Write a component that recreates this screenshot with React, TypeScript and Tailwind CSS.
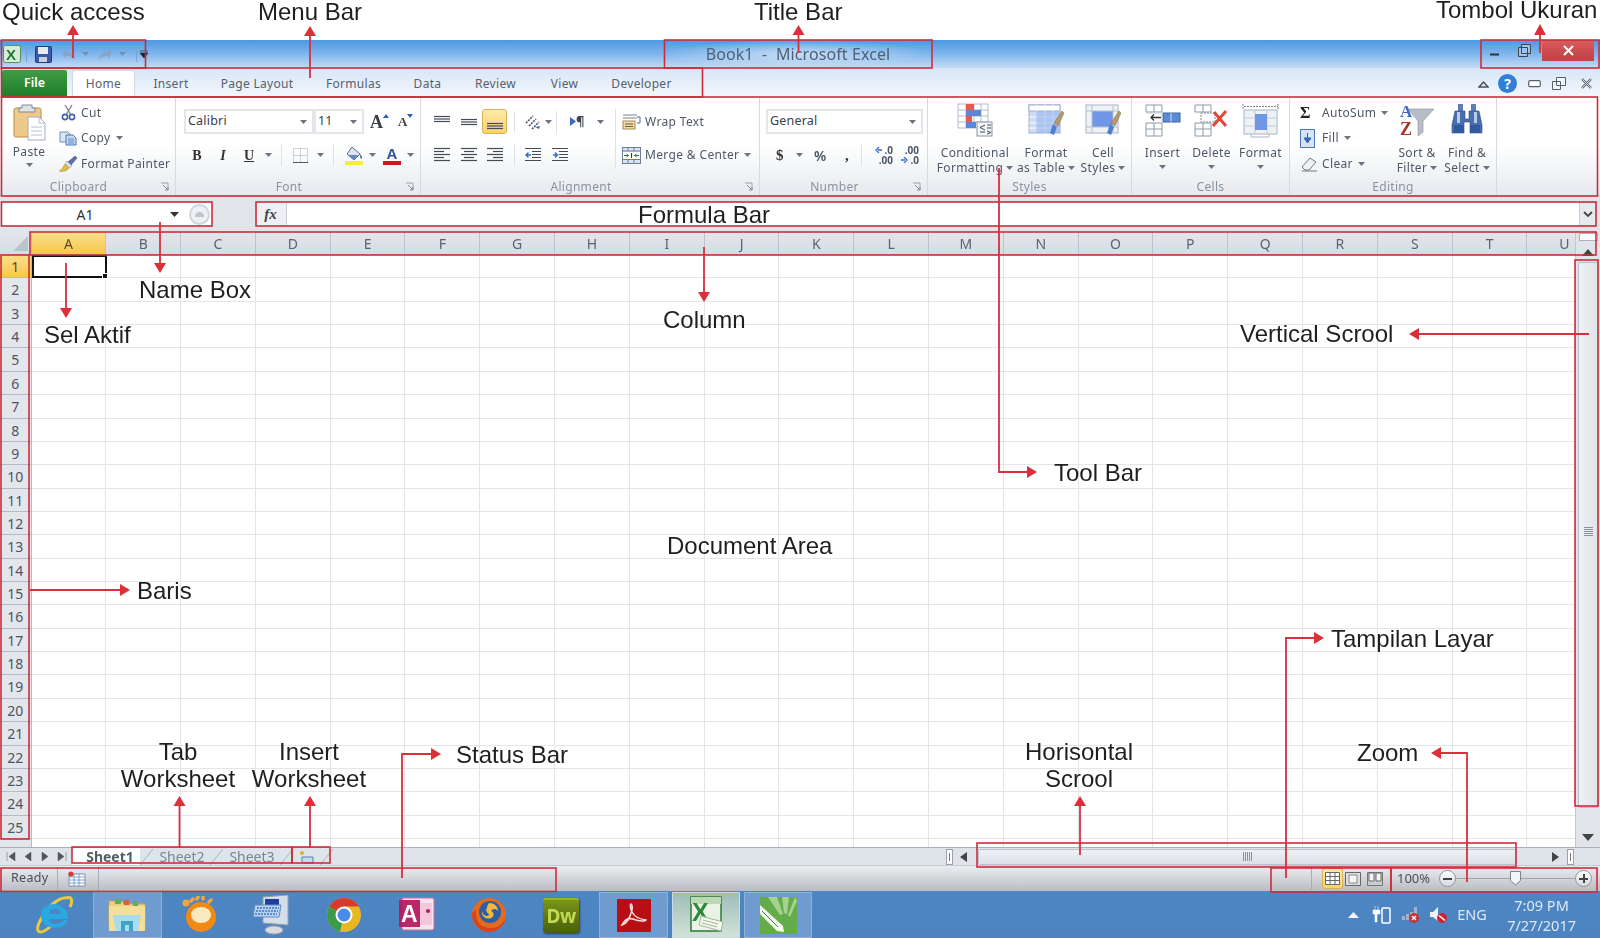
import type { ReactNode } from "react";

const cols = "ABCDEFGHIJKLMNOPQRSTU".split("");
const rows = Array.from({ length: 26 }, (_, i) => i + 1);

const Caret = ({ className = "" }: { className?: string }) => (
  <svg width="7" height="4" viewBox="0 0 7 4" className={className}>
    <path d="M0 0h7L3.5 4z" fill="#6b7480" />
  </svg>
);

const Sep = ({ className = "" }: { className?: string }) => (
  <div className={`w-px h-[22px] bg-[#dfe2e7] ${className}`} />
);

const Launcher = () => (
  <svg width="10" height="10" viewBox="0 0 10 10" className="absolute right-[5px] bottom-[3px]">
    <path d="M1 1h7v7" fill="none" stroke="#9aa3ad" />
    <path d="M3 3l5 5M8 5v3H5" fill="none" stroke="#7f8a97" />
  </svg>
);

const Group = ({ label, w, launcher, children }: { label: string; w: string; launcher?: boolean; children: ReactNode }) => (
  <div className={`relative h-full flex flex-col border-r border-[#d7dbe1] shrink-0 ${w}`}>
    <div className="flex-1 min-h-0">{children}</div>
    <div className={`h-[16px] text-center text-[12px] leading-[15px] text-[#8a93a0] tracking-[0.3px] ${launcher ? "pr-[18px]" : ""}`}>{label}</div>
    {launcher && <Launcher />}
  </div>
);

const AlignLines = ({ kind }: { kind: "top" | "mid" | "bot" | "left" | "center" | "right" }) => {
  const ys = kind === "top" ? [2, 4.5, 7] : kind === "mid" ? [5, 7.5, 10] : kind === "bot" ? [9, 11.5, 14] : [1, 4, 7, 10, 13];
  const widths = [16, 10, 16, 10, 16];
  return (
    <svg width="18" height="16" viewBox="0 0 18 16">
      {ys.map((y, i) => {
        const w = ys.length === 3 ? 16 : widths[i];
        const x = kind === "right" ? 17 - w : kind === "center" ? 9 - w / 2 : 1;
        return <path key={y} d={`M${x} ${y + 0.5}h${w}`} stroke="#444b55" strokeWidth="1.2" />;
      })}
    </svg>
  );
};

const SmallText = ({ children, className = "" }: { children: ReactNode; className?: string }) => (
  <span className={`text-[12px] tracking-[0.35px] text-[#4f5866] whitespace-nowrap ${className}`}>{children}</span>
);

const BigButton = ({ w, icon, l1, l2, caretInline }: { w: string; icon: ReactNode; l1: string; l2?: string; caretInline?: boolean }) => (
  <div className={`flex flex-col items-center shrink-0 ${w}`}>
    <div className="h-[37px] flex items-center justify-center">{icon}</div>
    <SmallText className="leading-[15px] mt-[7px]">{l1}</SmallText>
    {caretInline ? (
      <SmallText className="leading-[15px] flex items-center gap-[3px]">
        {l2} <Caret />
      </SmallText>
    ) : (
      <Caret className="mt-[5px]" />
    )}
  </div>
);

const CondIcon = () => (
  <svg width="36" height="34" viewBox="0 0 36 34">
    <path d="M1 1h30v24H1zM1 7h30M1 13h30M1 19h30M9 1v24M17 1v24M24 1v24" fill="#fff" stroke="#aebccd" />
    <rect x="9" y="1" width="8" height="6" fill="#e8594c" />
    <rect x="9" y="7" width="8" height="6" fill="#5d85d6" />
    <rect x="9" y="7" width="15" height="6" fill="#5d85d6" />
    <rect x="9" y="13" width="6" height="6" fill="#e8594c" />
    <rect x="9" y="19" width="10" height="6" fill="#5d85d6" />
    <rect x="20" y="19" width="15" height="14" fill="#f4f6f9" stroke="#8793a3" />
    <path d="M28 22l-5 2.5 5 2.5M23 29h5M30 22h4M30 25h4M30 28l4 1.5-4 1.5" fill="none" stroke="#3f4a58" />
  </svg>
);

const Brush = () => (
  <>
    <path d="M22 30l3-9 4 3-3 8z" fill="#4f7fd1" />
    <path d="M26 20l8-12 2 2-6 13z" fill="#b89a6a" stroke="#80694a" strokeWidth=".5" />
  </>
);

const TableIcon = () => (
  <svg width="36" height="34" viewBox="0 0 36 34">
    <rect x="1" y="2" width="31" height="28" fill="#cfdcf5" stroke="#9fb0c6" />
    <rect x="1" y="2" width="31" height="6" fill="#fff" stroke="#9fb0c6" />
    <path d="M9 2v28M17 2v28M25 2v28M1 14h31M1 20h31M1 25h31" stroke="#fff" />
    <path d="M8 8h24v22H8z" fill="#8fb0ea" opacity=".55" />
    <Brush />
  </svg>
);

const CellStyleIcon = () => (
  <svg width="36" height="34" viewBox="0 0 36 34">
    <rect x="1" y="2" width="32" height="28" fill="#eef2f7" stroke="#a8b4c3" />
    <rect x="7" y="8" width="21" height="16" fill="#6f97e6" />
    <path d="M7 2v28M28 2v28M1 8h32M1 24h32" stroke="#b4bfcd" />
    <Brush />
  </svg>
);

const InsertIcon = () => (
  <svg width="36" height="34" viewBox="0 0 36 34">
    <path d="M1 2h16v7H1zM9 2v7M1 20h16v13H1zM1 26h16M9 20v13" fill="#fff" stroke="#8c98a8" />
    <rect x="18" y="10" width="17" height="9" fill="#5d8ad6" stroke="#3d659f" />
    <path d="M26 10v9" stroke="#c9daf3" />
    <path d="M16 14.5H6M9 11.5l-3 3 3 3" fill="none" stroke="#333" strokeWidth="1.3" />
    <path d="M1 10h16v9" fill="none" stroke="#c5ccd6" />
  </svg>
);

const DeleteIcon = () => (
  <svg width="36" height="34" viewBox="0 0 36 34">
    <path d="M1 2h16v7H1zM9 2v7M1 20h16v13H1zM1 26h16M9 20v13" fill="#fff" stroke="#8c98a8" />
    <rect x="7" y="10" width="14" height="9" fill="#fff" stroke="#7d8a9a" strokeDasharray="2 1" />
    <path d="M20 9l12 14M32 8L19 23" stroke="#e2483a" strokeWidth="3" />
  </svg>
);

const FormatIcon = () => (
  <svg width="38" height="36" viewBox="0 0 38 36">
    <path d="M1 2v5M36 2v5M2 4.5h34" stroke="#596473" strokeWidth=".8" strokeDasharray="2 1" />
    <rect x="2" y="8" width="33" height="24" fill="#eef2f7" stroke="#a8b4c3" />
    <path d="M13 8v24M25 8v24M2 16h33M2 24h33" stroke="#c4ccd6" />
    <rect x="13" y="12" width="12" height="16" fill="#6f97e6" />
    <path d="M9 32v3h18v-3" fill="none" stroke="#a8b4c3" />
  </svg>
);

const FilterIcon = () => (
  <svg width="36" height="36" viewBox="0 0 36 36">
    <path d="M9 7h26l-11 12v11l-5 4V19z" fill="#b8bec7" stroke="#868e99" strokeWidth=".6" />
    <text x="1" y="15" fontSize="17" fontWeight="700" fontFamily="Liberation Serif, serif" fill="#3d6cc4">A</text>
    <text x="1" y="33" fontSize="18" fontWeight="700" fontFamily="Liberation Serif, serif" fill="#a5372f">Z</text>
  </svg>
);

const BinocularsIcon = () => (
  <svg width="34" height="34" viewBox="0 0 34 34">
    <path d="M8 1h5v7H8zM21 1h5v7h-5z" fill="#5d7fb8" />
    <path d="M5 8h10v8h4V8h10l3 14v8H20V19h-6v11H2v-8z" fill="#4a6fae" stroke="#2b4a80" strokeWidth=".6" />
    <path d="M4 22h10v8H4zM20 22h10v8H20z" fill="#2f5aa0" />
    <path d="M7 9h3v11H7zM24 9h3v11h-3z" fill="#b9cdea" />
  </svg>
);

const PasteIcon = () => (
  <svg width="33" height="38" viewBox="0 0 33 38">
    <rect x="1" y="5" width="27" height="29" rx="2" fill="#efc98a" stroke="#b8904f" />
    <path d="M9 5V2h10v3h3v4H6V5z" fill="#dfe3e8" stroke="#7f8894" />
    <path d="M15 14h11l6 6v17H15z" fill="#fff" stroke="#a3adb9" />
    <path d="M26 14v6h6M18 24h11M18 28h11M18 32h11" fill="none" stroke="#b9c2cd" />
  </svg>
);

const CutIcon = () => (
  <svg width="15" height="17" viewBox="0 0 15 17">
    <path d="M4 1l6 10M11 1L5 11" stroke="#7d8794" strokeWidth="1.4" />
    <circle cx="4" cy="13" r="2.6" fill="none" stroke="#3c63a8" strokeWidth="1.6" />
    <circle cx="11" cy="13" r="2.6" fill="none" stroke="#3c63a8" strokeWidth="1.6" />
  </svg>
);

const CopyIcon = () => (
  <svg width="18" height="15" viewBox="0 0 18 15">
    <path d="M1 1h8l2 2v8H1z" fill="#dbe6f5" stroke="#6d8fbf" />
    <path d="M7 4h7l3 3v7H7z" fill="#c7d9f1" stroke="#4d77b5" />
    <path d="M9 8h6M9 10h6M9 12h6" stroke="#4d77b5" strokeWidth=".8" />
  </svg>
);

const PainterIcon = () => (
  <svg width="20" height="17" viewBox="0 0 20 17">
    <path d="M10 7l7-6 2 2-6 7z" fill="#5b6fa8" stroke="#39456e" strokeWidth=".5" />
    <path d="M9 6l5 5-3 2-4-4z" fill="#dcdfe5" stroke="#808894" strokeWidth=".5" />
    <path d="M7 9l4 4c-2 3-6 4-10 3 3-1 4-4 6-7z" fill="#e4b743" stroke="#a9842a" strokeWidth=".5" />
  </svg>
);

const ClipboardGroup = () => (
  <Group label="Clipboard" w="w-[176px]" launcher>
    <div className="flex h-full">
      <div className="w-[58px] flex flex-col items-center pt-[6px]">
        <PasteIcon />
        <SmallText className="leading-[14px] mt-[4px]">Paste</SmallText>
        <Caret className="mt-[4px]" />
      </div>
      <div className="flex flex-col pt-[3px]">
        <div className="h-[25.5px] flex items-center">
          <div className="w-[23px] pl-[3px]"><CutIcon /></div>
          <SmallText>Cut</SmallText>
        </div>
        <div className="h-[25.5px] flex items-center">
          <div className="w-[23px] pl-[1px]"><CopyIcon /></div>
          <SmallText>Copy</SmallText>
          <Caret className="ml-[5px]" />
        </div>
        <div className="h-[25.5px] flex items-center">
          <div className="w-[23px]"><PainterIcon /></div>
          <SmallText className="tracking-[0.2px]">Format Painter</SmallText>
        </div>
      </div>
    </div>
  </Group>
);

const Select = ({ w, text, caretPad }: { w: string; text: string; caretPad: string }) => (
  <div className={`h-[25px] bg-white border-2 border-[#e3e6ea] flex items-center justify-between ${caretPad} pl-[2px] ${w}`}>
    <span className="text-[12.5px] text-[#39404a] tracking-[0.2px]">{text}</span>
    <Caret />
  </div>
);

const BorderIcon = () => (
  <svg width="17" height="17" viewBox="0 0 17 17">
    <path d="M1.5 1.5h14v14h-14zM8.5 1.5v14M1.5 8.5h14" fill="none" stroke="#a4abb5" strokeDasharray="1 1" />
    <path d="M1 15.5h15" stroke="#555" />
  </svg>
);

const FillIcon = () => (
  <svg width="19" height="19" viewBox="0 0 19 19">
    <path d="M7 1l8 7-6 6-7-6z" fill="#dbe4f0" stroke="#5a6b85" />
    <path d="M3 9h10l-4 5z" fill="#5b86c9" />
    <path d="M15 8c2 2 3 4 1 5-1-1-1-3-1-5z" fill="#4b75b8" />
    <rect x="0" y="15" width="18" height="4" fill="#f5f02e" />
  </svg>
);

const FontGroup = () => (
  <Group label="Font" w="w-[245px]" launcher>
    <div className="pl-[8px] pt-[12px]">
      <div className="flex items-center h-[25px]">
        <Select w="w-[130px]" text="Calibri" caretPad="pr-[5px]" />
        <Select w="w-[50px]" text="11" caretPad="pr-[5px]" />
        <span className="ml-[6px] text-[18px] font-bold font-['Liberation_Serif',serif] text-[#3a3f47] leading-none">A</span>
        <svg width="6" height="4" viewBox="0 0 6 4" className="mb-[12px]"><path d="M0 4l3-4 3 4z" fill="#2f62b0" /></svg>
        <span className="ml-[9px] text-[13px] font-bold font-['Liberation_Serif',serif] text-[#3a3f47] leading-none">A</span>
        <svg width="6" height="4" viewBox="0 0 6 4" className="mb-[12px]"><path d="M0 0l3 4 3-4z" fill="#2f62b0" /></svg>
      </div>
      <div className="flex items-center h-[24px] mt-[9px]">
        <div className="w-[26px] text-center text-[14px] font-bold font-['Liberation_Serif',serif] text-[#333]">B</div>
        <div className="w-[26px] text-center text-[14px] font-bold italic font-['Liberation_Serif',serif] text-[#333]">I</div>
        <div className="w-[26px] text-center text-[14px] font-bold underline font-['Liberation_Serif',serif] text-[#333]">U</div>
        <Caret className="ml-[3px]" />
        <Sep className="ml-[9px]" />
        <div className="ml-[10px]"><BorderIcon /></div>
        <Caret className="ml-[8px]" />
        <Sep className="ml-[9px]" />
        <div className="ml-[11px]"><FillIcon /></div>
        <Caret className="ml-[5px]" />
        <div className="ml-[7px] w-[18px] flex flex-col items-center">
          <span className="text-[15px] leading-[15px] font-bold font-['Liberation_Sans',sans-serif] text-[#2d4f9e]">A</span>
          <div className="w-[18px] h-[4px] bg-[#d8131c]" />
        </div>
        <Caret className="ml-[6px]" />
      </div>
    </div>
  </Group>
);

const OrientIcon = () => (
  <svg width="18" height="16" viewBox="0 0 18 16">
    <path d="M2 9l7-7M5 12l7-7M8 15l7-7" stroke="#4a5563" strokeWidth="1.6" strokeDasharray="2 1" />
    <path d="M11 13l5-1-1 3z" fill="#3b6cb8" />
  </svg>
);

const Rtl = () => (
  <span className="flex items-center text-[13px] font-bold text-[#3f4650] leading-none">
    <svg width="6" height="9" viewBox="0 0 6 9"><path d="M0 0l6 4.5L0 9z" fill="#3b6cb8" /></svg>¶
  </span>
);

const IndentIcon = ({ flip }: { flip?: boolean }) => (
  <svg width="18" height="16" viewBox="0 0 18 16">
    <path d="M1 1.5h16M8 4.5h9M8 7.5h9M8 10.5h9M1 13.5h16" stroke="#444b55" strokeWidth="1.1" />
    <path d={flip ? "M2 8h4M4 5.5L6.5 8 4 10.5" : "M7 8H2M4.5 5.5L2 8l2.5 2.5"} fill="none" stroke="#2f6fc4" strokeWidth="1.4" />
  </svg>
);

const WrapIcon = () => (
  <svg width="19" height="17" viewBox="0 0 19 17">
    <path d="M1 2h14M1 5h14" stroke="#7b8390" strokeWidth="1.2" />
    <rect x="1" y="8" width="12" height="8" fill="#f1d9a7" stroke="#a98c52" />
    <path d="M3 11h8M3 13.5h8" stroke="#75613a" />
    <path d="M15 4h3v6h-3" fill="none" stroke="#3b6cb8" />
  </svg>
);

const MergeIcon = () => (
  <svg width="19" height="17" viewBox="0 0 19 17">
    <rect x=".5" y=".5" width="18" height="16" fill="#d8e4f4" stroke="#6e7f96" />
    <path d="M0 4h19M0 12.5h19M6 0v4M12 0v4M6 13v4M12 13v4" stroke="#6e7f96" />
    <rect x="1" y="5" width="17" height="7" fill="#fff" />
    <path d="M2 8.5h5M4.5 7l2 1.5-2 1.5M17 8.5h-5M14.5 7l-2 1.5 2 1.5" fill="none" stroke="#2f62b0" />
    <path d="M9.5 6v5" stroke="#333" />
  </svg>
);

const AlignmentGroup = () => (
  <Group label="Alignment" w="w-[339px]" launcher>
    <div className="pl-[7px] pt-[12px] flex">
      <div className="flex flex-col w-[187px]">
        <div className="flex items-center h-[25px]">
          <div className="w-[27px] flex justify-center"><AlignLines kind="top" /></div>
          <div className="w-[27px] flex justify-center"><AlignLines kind="mid" /></div>
          <div className="w-[25px] h-[25px] flex items-center justify-center rounded-[3px] border border-[#d8b354] bg-linear-to-b from-[#fdeaa8] to-[#fbd36a]"><AlignLines kind="bot" /></div>
          <Sep className="ml-[7px]" />
          <div className="ml-[9px]"><OrientIcon /></div>
          <Caret className="ml-[3px]" />
          <Sep className="ml-[4px]" />
          <div className="ml-[13px]"><Rtl /></div>
          <Caret className="ml-[13px]" />
        </div>
        <div className="flex items-center h-[24px] mt-[9px]">
          <div className="w-[27px] flex justify-center"><AlignLines kind="left" /></div>
          <div className="w-[27px] flex justify-center"><AlignLines kind="center" /></div>
          <div className="w-[25px] flex justify-center"><AlignLines kind="right" /></div>
          <Sep className="ml-[7px]" />
          <div className="ml-[9px]"><IndentIcon /></div>
          <div className="ml-[9px]"><IndentIcon flip /></div>
        </div>
      </div>
      <div className="w-px h-[60px] bg-[#dfe2e7]" />
      <div className="flex flex-col pl-[6px]">
        <div className="flex items-center gap-[4px] h-[25px]"><WrapIcon /><SmallText>Wrap Text</SmallText></div>
        <div className="flex items-center gap-[4px] h-[24px] mt-[9px]"><MergeIcon /><SmallText>Merge &amp; Center</SmallText><Caret className="ml-[1px]" /></div>
      </div>
    </div>
  </Group>
);

const DecimalIcon = ({ more }: { more?: boolean }) => (
  <div className="relative w-[18px] h-[20px] text-[10px] font-bold leading-[10px] text-[#4a5563] text-right">
    <div>{more ? ".00" : ".0"}</div>
    <div>{more ? ".0" : ".00"}</div>
    <svg width="7" height="6" viewBox="0 0 7 6" className={`absolute left-0 ${more ? "top-[12px]" : "top-[2px]"}`}>
      <path d={more ? "M0 3h4M3 0l3 3-3 3" : "M7 3H3M4 0L1 3l3 3"} fill="none" stroke="#2f6fc4" strokeWidth="1.3" />
    </svg>
  </div>
);

const NumberGroup = () => (
  <Group label="Number" w="w-[168px]" launcher>
    <div className="pl-[6px] pt-[12px]">
      <Select w="w-[157px]" text="General" caretPad="pr-[5px]" />
      <div className="flex items-center h-[24px] mt-[9px]">
        <span className="ml-[10px] w-[12px] text-[15px] font-bold font-['Liberation_Serif',serif] text-[#333]">$</span>
        <Caret className="ml-[8px]" />
        <span className="ml-[11px] w-[16px] text-[14px] font-semibold text-[#4a5563]">%</span>
        <span className="ml-[15px] w-[6px] text-[15px] font-bold font-['Liberation_Serif',serif] text-[#333]">,</span>
        <Sep className="ml-[10px]" />
        <div className="ml-[13px]"><DecimalIcon /></div>
        <div className="ml-[8px]"><DecimalIcon more /></div>
      </div>
    </div>
  </Group>
);

const EraserIcon = () => (
  <svg width="18" height="16" viewBox="0 0 18 16">
    <path d="M2 11l8-9 6 4-7 8H5z" fill="#eef1f5" stroke="#6c7886" />
    <path d="M2 15h15" stroke="#6c7886" />
  </svg>
);

const FillDown = () => (
  <svg width="15" height="19" viewBox="0 0 15 19">
    <rect x=".5" y=".5" width="14" height="18" fill="#d7e4f6" stroke="#4d77b5" />
    <path d="M7.5 4v8M4 9l3.5 5L11 9z" stroke="#2f62b0" fill="#3a73c9" />
  </svg>
);

const StylesCellsEditing = () => (
  <>
    <Group label="Styles" w="w-[204px]">
      <div className="flex pt-[4px]">
        <BigButton w="w-[94px]" icon={<CondIcon />} l1="Conditional" l2="Formatting" caretInline />
        <BigButton w="w-[48px]" icon={<TableIcon />} l1="Format" l2="as Table" caretInline />
        <BigButton w="w-[66px]" icon={<CellStyleIcon />} l1="Cell" l2="Styles" caretInline />
      </div>
    </Group>
    <Group label="Cells" w="w-[158px]">
      <div className="flex pt-[4px] pl-[6px]">
        <BigButton w="w-[49px]" icon={<InsertIcon />} l1="Insert" />
        <BigButton w="w-[49px]" icon={<DeleteIcon />} l1="Delete" />
        <BigButton w="w-[49px]" icon={<FormatIcon />} l1="Format" />
      </div>
    </Group>
    <Group label="Editing" w="w-[207px]">
      <div className="flex">
        <div className="w-[102px] flex flex-col pt-[3px] pl-[10px]">
          <div className="h-[25.5px] flex items-center">
            <span className="w-[22px] text-[16px] font-bold font-['Liberation_Serif',serif] text-[#222]">Σ</span>
            <SmallText>AutoSum</SmallText>
            <Caret className="ml-[5px]" />
          </div>
          <div className="h-[25.5px] flex items-center">
            <div className="w-[22px]"><FillDown /></div>
            <SmallText>Fill</SmallText>
            <Caret className="ml-[5px]" />
          </div>
          <div className="h-[25.5px] flex items-center">
            <div className="w-[22px]"><EraserIcon /></div>
            <SmallText>Clear</SmallText>
            <Caret className="ml-[5px]" />
          </div>
        </div>
        <div className="pt-[4px] flex">
          <BigButton w="w-[50px]" icon={<FilterIcon />} l1="Sort &" l2="Filter" caretInline />
          <BigButton w="w-[50px]" icon={<BinocularsIcon />} l1="Find &" l2="Select" caretInline />
        </div>
      </div>
    </Group>
  </>
);

const TitleBar = () => (
  <div className="h-[28px] flex items-center bg-linear-to-b from-[#4b98e2] via-[#7fb6ec] to-[#c5dcf5]">
    <div className="w-[664px] flex items-center pl-[3px]">
      <svg width="18" height="18" viewBox="0 0 18 18">
        <rect x=".5" y=".5" width="17" height="17" rx="2" fill="#d7ecd7" stroke="#5a8f5a" />
        <text x="3" y="15" fontSize="15" fontWeight="700" fontFamily="Liberation Sans, sans-serif" fill="#1f7a33">X</text>
      </svg>
      <div className="w-px h-[16px] bg-[#7ba3cf] ml-[5px]" />
      <svg width="17" height="17" viewBox="0 0 17 17" className="ml-[8px]">
        <rect x=".5" y=".5" width="16" height="16" rx="1" fill="#3a59a8" stroke="#26397a" />
        <rect x="3" y="1" width="10" height="7" fill="#e6ecf6" />
        <rect x="4" y="11" width="8" height="5" fill="#c7d0de" />
      </svg>
      <svg width="17" height="15" viewBox="0 0 17 15" className="ml-[8px] opacity-70">
        <path d="M2 6l4-4v3c5 0 9 2 9 8-2-3-5-4-9-4v3z" fill="#8a9db8" />
      </svg>
      <Caret className="ml-[5px] opacity-60" />
      <svg width="17" height="15" viewBox="0 0 17 15" className="ml-[8px] opacity-70">
        <path d="M15 6l-4-4v3C6 5 2 7 2 13c2-3 5-4 9-4v3z" fill="#8a9db8" />
      </svg>
      <Caret className="ml-[5px] opacity-60" />
      <div className="w-px h-[16px] bg-[#7ba3cf] ml-[10px]" />
      <svg width="8" height="9" viewBox="0 0 8 9" className="ml-[3px]"><path d="M0 1h8M0 3h8l-4 5z" fill="#222" stroke="#222" strokeWidth=".6" /></svg>
    </div>
    <div className="w-[268px] h-full flex items-center justify-center bg-[radial-gradient(closest-side,#d5e6f8cc,#d5e6f800)]">
      <span className="text-[16px] text-[#4f6076] tracking-[0.1px]">Book1&nbsp; -&nbsp; Microsoft Excel</span>
    </div>
    <div className="flex-1" />
    <div className="h-full flex items-start">
      <svg width="14" height="28" viewBox="0 0 14 28" className="mr-[16px]"><path d="M2 14.5h9" stroke="#333" strokeWidth="2" /></svg>
      <svg width="13" height="28" viewBox="0 0 13 28" className="mr-[11px]"><path d="M3.5 4.5h9v9h-9zM.5 7.500h9v9h-9z" fill="#9cc4ee" stroke="#444" /></svg>
      <div className="w-[52px] h-[21px] flex items-center justify-center bg-linear-to-b from-[#d95d5e] to-[#c23e42] mr-[6px]">
        <svg width="11" height="11" viewBox="0 0 11 11"><path d="M1 1l9 9M10 1l-9 9" stroke="#fff" strokeWidth="2" /></svg>
      </div>
    </div>
  </div>
);

const TabLabel = ({ w, children }: { w: string; children: string }) => (
  <div className={`${w} text-center text-[12px] tracking-[0.3px] text-[#56606e] shrink-0`}>{children}</div>
);

const Tabs = () => (
  <div className="h-[29px] flex items-end bg-linear-to-b from-[#d8e6f7] to-[#f3f7fc] relative">
    <div className="ml-[2px] w-[65px] h-[27px] rounded-t-[2px] flex items-center justify-center text-[12.5px] font-semibold text-white bg-linear-to-b from-[#3f9c44] to-[#1e7d2a] border-b-0">File</div>
    <div className="ml-[5px] w-[63px] h-[27px] rounded-t-[3px] bg-white border border-b-0 border-[#d3d9e1] flex items-center justify-center text-[12px] tracking-[0.3px] text-[#56606e]">Home</div>
    <div className="flex h-[27px] items-center">
      <TabLabel w="w-[72px]">Insert</TabLabel>
      <TabLabel w="w-[100px]">Page Layout</TabLabel>
      <TabLabel w="w-[93px]">Formulas</TabLabel>
      <TabLabel w="w-[55px]">Data</TabLabel>
      <TabLabel w="w-[81px]">Review</TabLabel>
      <TabLabel w="w-[57px]">View</TabLabel>
      <TabLabel w="w-[97px]">Developer</TabLabel>
    </div>
    <div className="flex-1" />
    <div className="h-[27px] flex items-center pr-[7px] gap-[10px]">
      <svg width="11" height="8" viewBox="0 0 11 8"><path d="M1 7l4.5-5L10 7z" fill="none" stroke="#47505c" strokeWidth="1.5" /></svg>
      <div className="-ml-[1px] w-[19px] h-[19px] rounded-full bg-[#2f7fdb] text-white text-[14px] font-bold flex items-center justify-center leading-none">?</div>
      <svg width="13" height="8" viewBox="0 0 13 8" className="ml-[1px]"><rect x=".7" y=".7" width="11.6" height="6" rx="1.5" fill="#fff" stroke="#55606d" strokeWidth="1.2" /></svg>
      <svg width="14" height="13" viewBox="0 0 14 13" className="ml-[1px]"><path d="M4.5.5h9v8h-9zM.5 4.5h8v8h-8z" fill="#f2f6fb" stroke="#55606d" /></svg>
      <svg width="13" height="11" viewBox="0 0 13 11" className="ml-[4px]"><path d="M2 1l9 9M11 1l-9 9" stroke="#55606d" strokeWidth="2.4" /><path d="M2 1l9 9M11 1l-9 9" stroke="#fff" strokeWidth=".8" /></svg>
    </div>
  </div>
);

const FormulaBar = () => (
  <div className="h-[36px] pt-[6px] pb-[6px] bg-[#e1e5ea] flex">
    <div className="w-[188px] bg-white flex items-center pr-[10px] ml-[1px]">
      <span className="w-[168px] text-center text-[14px] text-[#333]">A1</span>
      <svg width="9" height="5" viewBox="0 0 9 5" className="ml-auto"><path d="M0 0h9L4.500 5z" fill="#333" /></svg>
    </div>
    <div className="w-[23px] bg-white flex items-center">
      <div className="w-[21px] h-[21px] rounded-full border-2 border-[#d1d6dc] bg-[#eef0f3] flex items-center justify-center">
        <div className="w-[9px] h-[5px] rounded-t-full bg-[#bfc5cd]" />
      </div>
    </div>
    <div className="w-[43px]" />
    <div className="w-[32px] bg-[#eef0f3] flex items-center justify-center border-r border-[#c9ced6]">
      <span className="text-[15px] font-bold italic font-['Liberation_Serif',serif] text-[#444]">fx</span>
    </div>
    <div className="flex-1 bg-white" />
    <div className="w-[18px] bg-[#e6e9ee] border border-[#c9ced6] mr-[3px] flex items-center justify-center">
      <svg width="10" height="7" viewBox="0 0 10 7"><path d="M1 1l4 4 4-4" fill="none" stroke="#444" strokeWidth="1.8" /></svg>
    </div>
  </div>
);

const Sheet = () => (
  <div className="h-[615px] flex">
    <div className="flex-1 min-w-0 overflow-hidden">
      <div className="h-[23px] flex bg-linear-to-b from-[#e3e7ec] to-[#d7dce3] border-b border-[#b5bbc4] w-[1603px]">
        <div className="w-[31.5px] shrink-0 border-r border-[#b5bbc4] flex items-end justify-end pr-[3px] pb-[3px]">
          <svg width="15" height="15" viewBox="0 0 15 15"><path d="M15 0v15H0z" fill="#bcc2ca" /></svg>
        </div>
        {cols.map((c) => (
          <div
            key={c}
            className={`w-[74.8px] shrink-0 border-r border-[#bcc2ca] text-center text-[14px] leading-[23px] ${c === "A" ? "bg-linear-to-b from-[#fde08a] to-[#f7c64c] text-[#5a4a20]" : "text-[#5b636e]"}`}
          >
            {c}
          </div>
        ))}
      </div>
      <div className="relative h-[592px] overflow-hidden bg-white">
        {rows.map((r) => (
          <div key={r} className="h-[23.36px] flex w-[1603px]">
            <div
              className={`w-[31.5px] shrink-0 border-r border-b border-[#b5bbc4] text-center text-[14px] leading-[23px] ${r === 1 ? "bg-linear-to-b from-[#fde08a] to-[#f7c64c] text-[#5a4a20]" : "bg-[#e3e6eb] text-[#4e5560]"}`}
            >
              {r === 26 ? "" : r}
            </div>
            {cols.map((c) => (
              <div key={c} className="w-[74.8px] shrink-0 border-r border-b border-[#e3e5e8]" />
            ))}
          </div>
        ))}
        <div className="absolute left-[32px] top-0 w-[75px] h-[23px] border-2 border-[#111]">
          <div className="absolute -right-[3px] -bottom-[3px] w-[6px] h-[6px] bg-[#111] border border-white" />
        </div>
      </div>
    </div>
    <div className="w-[25px] shrink-0 bg-[#e1e5ea] border-l border-[#c3c8cf] flex flex-col items-center">
      <div className="w-[19px] h-[8px] mt-[1px] bg-white border border-[#aab1bb]" />
      <svg width="12" height="7" viewBox="0 0 12 7" className="mt-[8px]"><path d="M0 7l6-7 6 7z" fill="#444" /></svg>
      <div className="w-[21px] h-[546px] mt-[6px] pb-[8px] rounded-[2px] border border-[#b9bfc8] bg-linear-to-r from-[#eff1f4] to-[#dfe3e8] flex items-center justify-center">
        <svg width="9" height="9" viewBox="0 0 9 9"><path d="M0 .5h9M0 2.500h9M0 4.500h9M0 6.500h9M0 8.500h9" stroke="#8b929c" /></svg>
      </div>
      <svg width="12" height="7" viewBox="0 0 12 7" className="mt-[26px]"><path d="M0 0l6 7 6-7z" fill="#444" /></svg>
    </div>
  </div>
);

const NavArrow = ({ d }: { d: string }) => (
  <svg width="10" height="9" viewBox="0 0 10 9"><path d={d} fill="#555" stroke="#555" strokeWidth=".5" /></svg>
);

const TabSlant = () => (
  <svg width="14" height="18" viewBox="0 0 14 18" className="shrink-0"><path d="M0 17L13 1" stroke="#aeb4bd" /></svg>
);

const SheetBar = () => (
  <div className="h-[18px] flex items-center bg-[#dfe3ea] border-t border-[#a9afb8]">
    <div className="w-[72px] flex items-center gap-[7px] pl-[6px]">
      <NavArrow d="M1 0v9M9 0v9L3 4.500z" />
      <NavArrow d="M8 0v9L2 4.500z" />
      <NavArrow d="M2 0v9l6-4.500z" />
      <NavArrow d="M9 0v9M1 0v9l6-4.500z" />
    </div>
    <div className="w-[68px] h-full bg-white flex items-center justify-center pl-[12px] pr-[4px] text-[14px] font-bold text-[#555c66]">Sheet1</div>
    <TabSlant />
    <div className="w-[56px] text-center text-[14px] text-[#7d8592]">Sheet2</div>
    <TabSlant />
    <div className="w-[56px] text-center text-[14px] text-[#7d8592]">Sheet3</div>
    <TabSlant />
    <svg width="18" height="14" viewBox="0 0 18 14" className="ml-[3px] shrink-0">
      <path d="M5 1v4M3 3h4M3.500 1.500l3 3M6.500 1.500l-3 3" stroke="#d9a521" />
      <path d="M5 7h11v6H5z" fill="#c7d8f0" stroke="#5f7ba3" />
    </svg>
    <div className="ml-[5px]"><TabSlant /></div>
    <div className="flex-1" />
    <div className="w-[7px] h-[16px] bg-white border border-[#9ba2ab] flex items-center justify-center"><div className="w-px h-[8px] bg-[#777]" /></div>
    <svg width="8" height="10" viewBox="0 0 8 10" className="ml-[7px]"><path d="M7 0v10L0 5z" fill="#444" /></svg>
    <div className="w-[539px] h-[16px] ml-[10px] rounded-[2px] border border-[#bcc2ca] bg-linear-to-b from-[#eef0f4] to-[#dde1e7] flex items-center justify-center">
      <svg width="9" height="9" viewBox="0 0 9 9"><path d="M.5 0v9M2.500 0v9M4.500 0v9M6.500 0v9M8.500 0v9" stroke="#8b929c" /></svg>
    </div>
    <svg width="8" height="10" viewBox="0 0 8 10" className="ml-[35px]"><path d="M0 0v10l7-5z" fill="#444" /></svg>
    <div className="w-[7px] h-[16px] ml-[7px] mr-[26px] bg-white border border-[#9ba2ab] flex items-center justify-center"><div className="w-px h-[8px] bg-[#777]" /></div>
  </div>
);

const StatusBar = () => (
  <div className="h-[26px] flex items-center bg-linear-to-b from-[#eceef1] via-[#d3d5da] to-[#b9bcc2] border-t border-[#c7cad0]">
    <span className="ml-[11px] w-[46px] text-[12.500px] tracking-[0.3px] text-[#4a4f57]">Ready</span>
    <div className="w-px h-[24px] bg-[#a9adb4]" />
    <svg width="18" height="16" viewBox="0 0 18 16" className="ml-[10px]">
      <rect x="1" y="3" width="16" height="12" fill="#fff" stroke="#7f93b0" />
      <path d="M1 6h16M1 9h16M1 12h16M6 3v12M11 3v12" stroke="#7ea2d6" />
      <circle cx="3" cy="3" r="2.600" fill="#d0402f" />
    </svg>
    <div className="w-px h-[24px] bg-[#a9adb4] ml-[12px]" />
    <div className="flex-1" />
    <div className="w-px h-[22px] bg-[#a9adb4]" />
    <div className="ml-[10px] w-[21px] h-[21px] rounded-[3px] border border-[#d8b354] bg-linear-to-b from-[#fdeaa8] to-[#fbd36a] flex items-center justify-center">
      <svg width="15" height="13" viewBox="0 0 15 13"><path d="M.5.5h14v12H.5zM.5 4.500h14M.5 8.500h14M5 .5v12M10 .5v12" fill="#fff" stroke="#666" /></svg>
    </div>
    <svg width="16" height="14" viewBox="0 0 16 14" className="ml-[2px]"><path d="M.5.5h15v13H.5z" fill="#ddd" stroke="#666" /><path d="M4 3h8v8H4z" fill="#f5f5f5" stroke="#888" /></svg>
    <svg width="16" height="14" viewBox="0 0 16 14" className="ml-[6px]"><path d="M.5.5h15v13H.5z" fill="#c9ccd1" stroke="#777" /><path d="M2 1h5v8H2zM9 1h5v8H9z" fill="#f5f5f5" stroke="#666" /></svg>
    <span className="ml-[14px] w-[36px] text-[13px] text-[#4a4f57]">100%</span>
    <div className="ml-[6px] w-[17px] h-[17px] rounded-full border border-[#8f959d] bg-linear-to-b from-white to-[#d7d9dd] flex items-center justify-center">
      <div className="w-[9px] h-[2px] bg-[#444]" />
    </div>
    <div className="relative w-[119px] h-px bg-[#9fa4ab]">
      <svg width="11" height="15" viewBox="0 0 11 15" className="absolute left-[54px] -top-[7px]"><path d="M.5.500h10v9L5.500 14 .5 9.500z" fill="#f4f5f7" stroke="#7d838b" /></svg>
    </div>
    <div className="w-[17px] h-[17px] mr-[8px] rounded-full border border-[#8f959d] bg-linear-to-b from-white to-[#d7d9dd] flex items-center justify-center relative">
      <div className="w-[9px] h-[2px] bg-[#444]" />
      <div className="absolute w-[2px] h-[9px] bg-[#444]" />
    </div>
  </div>
);

const IeIcon = () => (
  <svg width="42" height="40" viewBox="0 0 42 40">
    <path d="M34 3C26 1 12 12 5 28c-3 7-1 11 5 8 2-1 5-3 7-5" fill="none" stroke="#e8c93c" strokeWidth="3" />
    <path d="M20 9a14 14 0 0 1 14 15H15c1 6 10 7 15 1h4c-4 11-25 11-27-3C6 15 12 9 20 9zm7 10c-1-7-11-7-12 0z" fill="#2aa8e0" />
    <path d="M33 3c5-2 6 3 3 9" fill="none" stroke="#e8c93c" strokeWidth="3" />
  </svg>
);

const FolderIcon = () => (
  <svg width="38" height="36" viewBox="0 0 38 36">
    <path d="M1 4h12l3 3h21v22H1z" fill="#e9cf7f" stroke="#c9ab58" />
    <rect x="1" y="9" width="36" height="25" fill="#f4df98" />
    <path d="M7 2h6v5H7zM16 3h5v5h-5zM25 4h5v5h-5z" fill="#5cae62" />
    <path d="M16 3h5v5h-5z" fill="#d8603c" />
    <path d="M5 18h28l-3 16H8z" fill="#a9dcec" />
    <path d="M13 24h12v10h-4v-6h-4v6h-4z" fill="#3fa3c6" />
  </svg>
);

const GomIcon = () => (
  <svg width="38" height="38" viewBox="0 0 38 38">
    <circle cx="20" cy="21" r="15" fill="#f08a12" />
    <ellipse cx="20" cy="19" rx="10" ry="8" fill="#fbe9c2" />
    <circle cx="5" cy="7" r="3.500" fill="#f3a63a" />
    <path d="M10 5l2-2M16 3l1-2M22 3v-2M28 6l2-2" stroke="#f3a63a" strokeWidth="3.500" strokeLinecap="round" />
  </svg>
);

const KeyboardIcon = () => (
  <svg width="38" height="40" viewBox="0 0 38 40">
    <path d="M10 2l25-2v30l-25-2z" fill="#d5dde8" stroke="#94a1b1" />
    <path d="M12 4l14 0v8l-14 1z" fill="#1f3f9e" />
    <path d="M2 10h26l-2 12H0z" fill="#b9d2f0" stroke="#5f8cc4" />
    <path d="M4 13h22M3 16h22M2 19h22" stroke="#3f78bd" strokeDasharray="2 1" strokeWidth="1.500" />
    <ellipse cx="21" cy="35" rx="9" ry="4" fill="#d8dade" stroke="#9da2a8" />
  </svg>
);

const ChromeIcon = () => (
  <svg width="36" height="36" viewBox="0 0 36 36">
    <circle cx="18" cy="18" r="17" fill="#e9b820" />
    <path d="M18 18L3.300 9.500A17 17 0 0 1 32.700 9.500H18z" fill="#d8392b" />
    <path d="M18 18L3.300 9.500A17 17 0 0 0 14 34.500z" fill="#3a9c47" />
    <circle cx="18" cy="18" r="8.500" fill="#fff" />
    <circle cx="18" cy="18" r="6.500" fill="#4a8be8" />
  </svg>
);

const AccessIcon = () => (
  <svg width="36" height="36" viewBox="0 0 36 36">
    <rect x="3" y="1" width="32" height="32" rx="2" fill="#fbe3ee" stroke="#d56a9a" />
    <path d="M18 6h15v22H18z" fill="#f6c6da" />
    <circle cx="29" cy="14" r="2" fill="#b3195c" />
    <rect x="0" y="3" width="21" height="27" fill="#b3195c" opacity=".92" />
    <text x="2" y="25" fontSize="23" fontWeight="700" fontFamily="Liberation Sans, sans-serif" fill="#fff">A</text>
  </svg>
);

const FirefoxIcon = () => (
  <svg width="36" height="38" viewBox="0 0 36 38">
    <circle cx="18" cy="19" r="17" fill="#e46a1d" />
    <circle cx="19" cy="16" r="11" fill="#2d5fa8" />
    <path d="M18 7c5 0 9 3 9 8-3-3-5-2-7 0 3 1 4 5 0 7-5 2-10-2-9-7 1 6 7 6 7 3-2-1-4-4-2-6 0-2 1-4 2-5z" fill="#f6b73c" />
    <path d="M1 19c1 10 8 17 17 17s16-7 17-15c-3 8-9 11-15 11C11 32 4 27 5 14c-2 1-4 2-4 5z" fill="#d8431b" />
  </svg>
);

const DwIcon = () => (
  <div className="w-[36px] h-[35px] rounded-[3px] bg-linear-to-b from-[#79941a] to-[#4a5f0c] border-t-2 border-[#9ab22e] shadow-[1px_1px_2px_#2a3f66] flex items-center justify-center text-[19px] font-bold text-[#c5da50] tracking-tight">Dw</div>
);

const PdfIcon = () => (
  <svg width="34" height="33" viewBox="0 0 34 33">
    <rect width="34" height="33" rx="1" fill="#b90e14" />
    <path d="M5 26c4-1 8-7 10-15 .5-3 0-6-1-6s-1 4 1 8c2 4 6 7 14 8 0 1-6 2-13-1-4-1-7 0-9 3z" fill="none" stroke="#fbe2dd" strokeWidth="1.500" />
  </svg>
);

const XlIcon = () => (
  <svg width="36" height="38" viewBox="0 0 36 38">
    <path d="M3 1h30v34H3z" fill="#e8f3e6" stroke="#2f7a3d" strokeWidth="1.500" />
    <path d="M3 1h30v7H3z" fill="#bcd9b4" />
    <text x="4" y="25" fontSize="25" fontWeight="700" fontFamily="Liberation Sans, sans-serif" fill="#2f8a3a">X</text>
    <path d="M13 20l22 6-2 9-22-6z" fill="#f5f8ee" stroke="#a3b89a" />
    <path d="M15 24l15 4M14 27l15 4" stroke="#9cb88e" />
  </svg>
);

const CorelIcon = () => (
  <svg width="37" height="37" viewBox="0 0 37 37">
    <rect width="37" height="37" fill="#64ac4a" />
    <path d="M8 0l12 18 3-1L17 0zM22 0l2 16 3 1 2-17zM35 0l-7 18 2 2 7-16z" fill="#a5d38e" />
    <path d="M0 8l23 21 1 6-7-1L0 17z" fill="#f4f8f0" />
    <path d="M2 14l16 16" stroke="#3d7c2b" />
  </svg>
);

const TaskSlot = ({ active, pinned, children }: { active?: boolean; pinned?: boolean; children: ReactNode }) => (
  <div className="w-[72.3px] h-full shrink-0 px-[2px] pt-[1px]">
    <div
      className={`h-full flex items-center justify-center ${active ? "bg-linear-to-b from-[#9dbdb8] to-[#d2e3d9] border border-[#c9d9e5]" : pinned ? "bg-[#6f9bd0] border border-[#8eb1da]" : ""}`}
    >
      {children}
    </div>
  </div>
);

const Taskbar = () => (
  <div className="h-[47px] flex bg-linear-to-b from-[#4e86c4] to-[#4c83c0] pl-[19px]">
    <TaskSlot><IeIcon /></TaskSlot>
    <TaskSlot pinned><FolderIcon /></TaskSlot>
    <TaskSlot><GomIcon /></TaskSlot>
    <TaskSlot><KeyboardIcon /></TaskSlot>
    <TaskSlot><ChromeIcon /></TaskSlot>
    <TaskSlot><AccessIcon /></TaskSlot>
    <TaskSlot><FirefoxIcon /></TaskSlot>
    <TaskSlot><DwIcon /></TaskSlot>
    <TaskSlot pinned><PdfIcon /></TaskSlot>
    <TaskSlot active><XlIcon /></TaskSlot>
    <TaskSlot pinned><CorelIcon /></TaskSlot>
    <div className="flex-1" />
    <div className="flex items-center pr-[24px] text-[#dfe9f5]">
      <svg width="11" height="6" viewBox="0 0 11 6"><path d="M0 6l5.500-6L11 6z" fill="#f2f6fb" /></svg>
      <svg width="19" height="19" viewBox="0 0 19 19" className="ml-[13px]">
        <path d="M3 1v4M6 1v4M1 5h7v4H5v8H3V9H1z" fill="#fff" stroke="#fff" strokeWidth=".5" />
        <rect x="10" y="3" width="8" height="15" rx="1" fill="none" stroke="#fff" strokeWidth="1.500" />
      </svg>
      <svg width="19" height="17" viewBox="0 0 19 17" className="ml-[10px]">
        <path d="M1 10h3v4H1zM5 8h3v6H5zM9 6h3v8H9zM13 1h3v13h-3z" fill="#9fb4cc" />
        <circle cx="13" cy="12" r="5" fill="#c8323a" />
        <path d="M11 10l4 4M15 10l-4 4" stroke="#fff" strokeWidth="1.300" />
      </svg>
      <svg width="20" height="18" viewBox="0 0 20 18" className="ml-[9px]">
        <path d="M1 6h3l5-5v14L4 11H1z" fill="#eef3f9" />
        <circle cx="13" cy="12" r="5" fill="#d4222c" />
        <path d="M10 9.500l6 5" stroke="#fff" strokeWidth="1.600" />
      </svg>
      <span className="ml-[8px] w-[32px] text-[14.500px] text-[#dfe9f5]">ENG</span>
      <div className="ml-[18px] flex flex-col items-center text-[14.500px] leading-[20px]">
        <span>7:09 PM</span>
        <span>7/27/2017</span>
      </div>
    </div>
  </div>
);

const labelBase = "absolute text-[24px] leading-[28px] text-[#1f1f1f] font-['Liberation_Sans',Arial,sans-serif] whitespace-nowrap";
const stackBase = "absolute w-[140px] text-center text-[24px] leading-[26.5px] text-[#1f1f1f] font-['Liberation_Sans',Arial,sans-serif]";
const topBase = "absolute top-0 text-[24px] text-[#1f1f1f] font-['Liberation_Sans',Arial,sans-serif] whitespace-nowrap";

const Annotations = () => (
  <>
    <svg width="1600" height="938" viewBox="0 0 1600 938" className="absolute inset-0 pointer-events-none">
      <g fill="none" stroke="#cc2d3b" strokeWidth="1.600">
        <rect x="1.500" y="40" width="144" height="28" />
        <rect x="1.500" y="68" width="701" height="29" />
        <rect x="664.500" y="40" width="267.500" height="28" />
        <rect x="1481" y="40" width="118" height="28" />
        <rect x="1.500" y="97" width="1596" height="99" />
        <rect x="1.500" y="202" width="210.500" height="24" />
        <rect x="256" y="202" width="1340" height="24" />
        <rect x="30" y="232" width="1566" height="23" />
        <rect x="1" y="255" width="28" height="584" />
        <rect x="1575" y="260" width="23" height="546" />
        <rect x="72" y="847" width="220" height="16" />
        <rect x="292" y="847" width="38" height="16" />
        <rect x="1" y="868" width="555" height="23.500" />
        <rect x="977" y="843" width="539" height="24" />
        <rect x="1271" y="868" width="120" height="24" />
        <rect x="1391" y="868" width="206" height="24" />
      </g>
      <g fill="none" stroke="#d8303c" strokeWidth="1.800">
        <path d="M73 34V58" />
        <path d="M310 34V78" />
        <path d="M798.500 34V53" />
        <path d="M1540 34V53" />
        <path d="M160 222V264" />
        <path d="M704 247V293" />
        <path d="M66 263V309" />
        <path d="M30 590H121" />
        <path d="M1589 334H1418" />
        <path d="M999 168V472H1028" />
        <path d="M179.500 848V805" />
        <path d="M310 848V805" />
        <path d="M402 878V754H432" />
        <path d="M1080 855V805" />
        <path d="M1286 878V638H1315" />
        <path d="M1467 882V753H1440" />
      </g>
      <g fill="#dd2f3a">
        <path d="M73 25l-6 10h12z" />
        <path d="M310 26l-6 10h12z" />
        <path d="M798.500 25l-6 10h12z" />
        <path d="M1540 24l-6 11h12z" />
        <path d="M160 273l-6-10h12z" />
        <path d="M704 302l-6-10h12z" />
        <path d="M66 318l-6-10h12z" />
        <path d="M130 590l-10-6v12z" />
        <path d="M1409 334l10-6v12z" />
        <path d="M1037 472l-10-6v12z" />
        <path d="M179.500 796l-6 10h12z" />
        <path d="M310 796l-6 10h12z" />
        <path d="M441 754l-10-6v12z" />
        <path d="M1080 796l-6 10h12z" />
        <path d="M1324 638l-10-6v12z" />
        <path d="M1431 753l10-6v12z" />
      </g>
    </svg>
    <span className={`${topBase} left-[2px] leading-[24px]`}>Quick access</span>
    <span className={`${topBase} left-[258px] leading-[24px]`}>Menu Bar</span>
    <span className={`${topBase} left-[754px] leading-[24px]`}>Title Bar</span>
    <span className={`${topBase} left-[1436px] leading-[20px]`}>Tombol Ukuran</span>
    <span className={`${labelBase} left-[638px] top-[201px]`}>Formula Bar</span>
    <span className={`${labelBase} left-[139px] top-[276px]`}>Name Box</span>
    <span className={`${labelBase} left-[44px] top-[321px]`}>Sel Aktif</span>
    <span className={`${labelBase} left-[663px] top-[306px]`}>Column</span>
    <span className={`${labelBase} left-[1240px] top-[320px]`}>Vertical Scrool</span>
    <span className={`${labelBase} left-[1054px] top-[459px]`}>Tool Bar</span>
    <span className={`${labelBase} left-[667px] top-[532px]`}>Document Area</span>
    <span className={`${labelBase} left-[137px] top-[577px]`}>Baris</span>
    <span className={`${labelBase} left-[1331px] top-[625px]`}>Tampilan Layar</span>
    <span className={`${labelBase} left-[1357px] top-[739px]`}>Zoom</span>
    <span className={`${stackBase} left-[1009px] top-[739px]`}>Horisontal<br />Scrool</span>
    <span className={`${stackBase} left-[108px] top-[739px]`}>Tab<br />Worksheet</span>
    <span className={`${stackBase} left-[239px] top-[739px]`}>Insert<br />Worksheet</span>
    <span className={`${labelBase} left-[456px] top-[741px]`}>Status Bar</span>
  </>
);

export default function App() {
  return (
    <div className="relative w-[1600px] h-[938px] overflow-hidden bg-white font-['Noto_Sans',sans-serif]">
      <div className="blur-[0.35px]">
        <div className="h-[40px]" />
        <TitleBar />
        <Tabs />
        <div className="h-[99px] flex bg-linear-to-b from-white via-white to-[#e6e9ee] border-b border-[#c6cbd2]">
          <ClipboardGroup />
          <FontGroup />
          <AlignmentGroup />
          <NumberGroup />
          <StylesCellsEditing />
        </div>
        <FormulaBar />
        <Sheet />
        <SheetBar />
        <StatusBar />
        <Taskbar />
      </div>
      <Annotations />
    </div>
  );
}
